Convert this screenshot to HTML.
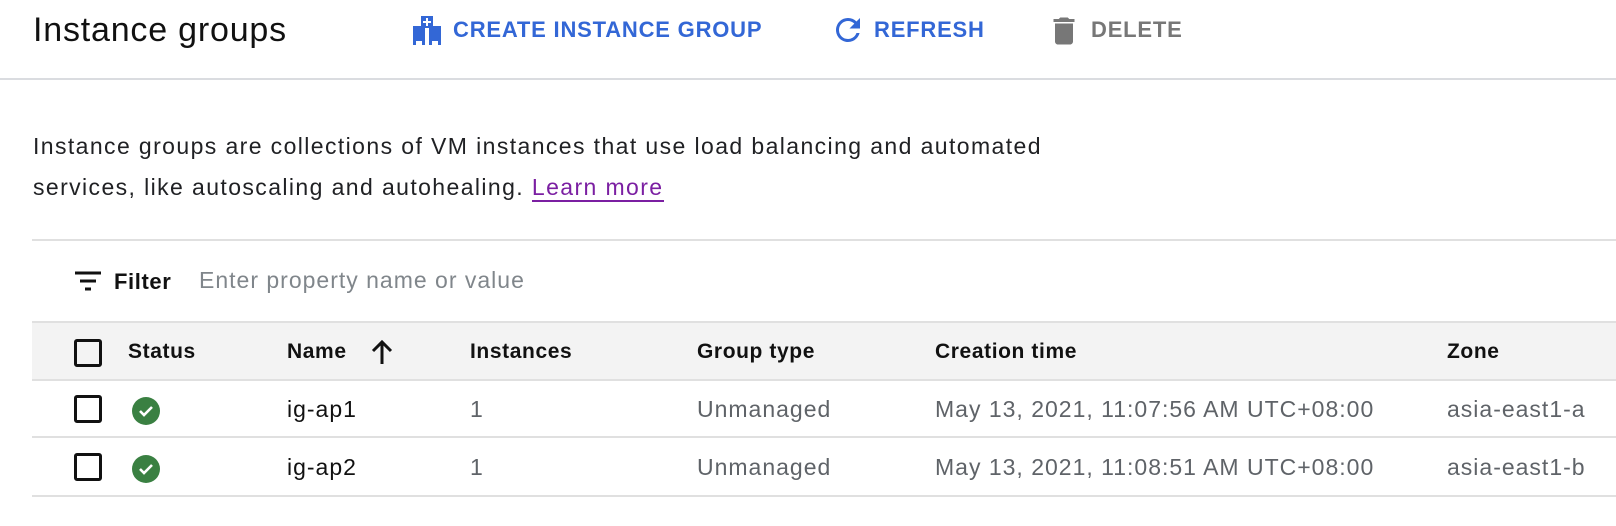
<!DOCTYPE html>
<html><head><style>
body{margin:0;width:1616px;height:526px;background:#fff;font-family:"Liberation Sans",sans-serif;position:relative;overflow:hidden;color:#202124}
.a{position:absolute;white-space:nowrap}
.btn{color:#3367d6;font-size:22px;font-weight:bold;letter-spacing:0.8px;top:17px}
.h{font-size:21px;font-weight:bold;color:#111;letter-spacing:0.6px}
.v{font-size:23px;color:#5f6368;letter-spacing:1px}
.cb{position:absolute;left:74px;width:22px;height:22px;border:3.5px solid #111;border-radius:3px}
.ok{position:absolute;left:132px;width:28px;height:28px;border-radius:50%;background:#3a8042}
</style></head><body>
<div class="a" style="left:33px;top:11px;font-size:34px;letter-spacing:0.8px;color:#111">Instance groups</div>
<svg class="a" style="left:412px;top:15px" width="30" height="32" viewBox="0 0 30 32"><rect x="9" y="1" width="12" height="12" fill="#3367d6"/><path d="M15 3v8M11 7h8" stroke="#fff" stroke-width="2"/><rect x="1" y="11" width="12" height="19" fill="#3367d6"/><rect x="17" y="11" width="12" height="19" fill="#3367d6"/><path d="M4 30v-4h6v4M20 30v-4h6v4" fill="#fff"/></svg>
<div class="a btn" style="left:453px">CREATE INSTANCE GROUP</div>
<svg class="a" style="left:830px;top:12px" width="36" height="36" viewBox="0 0 24 24"><path fill="#3367d6" d="M17.65 6.35A7.96 7.96 0 0 0 12 4a8 8 0 1 0 7.73 10h-2.08A6 6 0 1 1 12 6c1.66 0 3.140.69 4.22 1.78L13 11h7V4l-2.35 2.35z"/></svg>
<div class="a btn" style="left:874px">REFRESH</div>
<svg class="a" style="left:1046px;top:12px" width="36" height="38" viewBox="0 0 24 24"><path fill="#777" d="M6 19c0 1.1.9 2 2 2h8c1.1 0 2-.9 2-2V7H6v12zM19 4h-3.5l-1-1h-5l-1 1H5v2h14V4z"/></svg>
<div class="a btn" style="left:1091px;color:#777">DELETE</div>
<div class="a" style="left:0;top:78px;width:1616px;height:2px;background:#dadce0"></div>
<div class="a" style="left:33px;top:126px;font-size:23px;letter-spacing:1.4px;line-height:41px;color:#202124">Instance groups are collections of VM instances that use load balancing and automated<br>services, like autoscaling and autohealing. <span style="color:#7b1fa2;border-bottom:2px solid #7b1fa2">Learn more</span></div>
<div class="a" style="left:32px;top:239px;width:1584px;height:2px;background:#e0e0e0"></div>
<svg class="a" style="left:74px;top:270px" width="28" height="22" viewBox="0 0 28 22"><path d="M1 3h26M6 11h16M11 19h6" stroke="#111" stroke-width="3"/></svg>
<div class="a h" style="left:114px;top:269px;font-size:22px">Filter</div>
<div class="a v" style="left:199px;top:267px;color:#80868b">Enter property name or value</div>
<div class="a" style="left:32px;top:321px;width:1584px;height:60px;background:#f3f3f3;border-top:2px solid #e0e0e0;border-bottom:2px solid #e0e0e0;box-sizing:border-box"></div>
<div class="a" style="left:32px;top:436px;width:1584px;height:2px;background:#e0e0e0"></div>
<div class="a" style="left:32px;top:495px;width:1584px;height:2px;background:#e0e0e0"></div>
<div class="cb" style="top:339px"></div>
<div class="a h" style="left:128px;top:340px">Status</div>
<div class="a h" style="left:287px;top:340px">Name</div>
<svg class="a" style="left:370px;top:338px" width="24" height="28" viewBox="0 0 24 28"><path d="M12 26V4M3 13l9-9 9 9" stroke="#111" stroke-width="3" fill="none"/></svg>
<div class="a h" style="left:470px;top:340px">Instances</div>
<div class="a h" style="left:697px;top:340px">Group type</div>
<div class="a h" style="left:935px;top:340px">Creation time</div>
<div class="a h" style="left:1447px;top:340px">Zone</div>
<div class="cb" style="top:395px"></div>
<div class="ok" style="top:397px"><svg width="28" height="28" viewBox="0 0 28 28"><path d="M8 14l4 4 8-8" stroke="#fff" stroke-width="2.6" fill="none"/></svg></div>
<div class="a v" style="left:287px;top:396px;color:#111">ig-ap1</div>
<div class="a v" style="left:470px;top:396px">1</div>
<div class="a v" style="left:697px;top:396px">Unmanaged</div>
<div class="a v" style="left:935px;top:396px">May 13, 2021, 11:07:56 AM UTC+08:00</div>
<div class="a v" style="left:1447px;top:396px">asia-east1-a</div>
<div class="cb" style="top:453px"></div>
<div class="ok" style="top:455px"><svg width="28" height="28" viewBox="0 0 28 28"><path d="M8 14l4 4 8-8" stroke="#fff" stroke-width="2.6" fill="none"/></svg></div>
<div class="a v" style="left:287px;top:454px;color:#111">ig-ap2</div>
<div class="a v" style="left:470px;top:454px">1</div>
<div class="a v" style="left:697px;top:454px">Unmanaged</div>
<div class="a v" style="left:935px;top:454px">May 13, 2021, 11:08:51 AM UTC+08:00</div>
<div class="a v" style="left:1447px;top:454px">asia-east1-b</div>
</body></html>
